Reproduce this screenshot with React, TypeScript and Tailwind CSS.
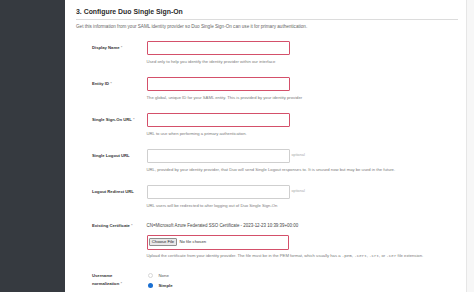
const font = { fontFamily: '"Liberation Sans", Arial, sans-serif' };

type Field = {
  label: string;
  required?: boolean;
  help: string;
  optional?: boolean;
};

const fields: Field[] = [
  { label: "Display Name", required: true, help: "Used only to help you identify the identity provider within our interface" },
  { label: "Entity ID", required: true, help: "The global, unique ID for your SAML entity. This is provided by your identity provider" },
  { label: "Single Sign-On URL", required: true, help: "URL to use when performing a primary authentication." },
  {
    label: "Single Logout URL",
    optional: true,
    help: "URL, provided by your identity provider, that Duo will send Single Logout responses to. It is unused now but may be used in the future.",
  },
  { label: "Logout Redirect URL", optional: true, help: "URL users will be redirected to after logging out of Duo Single Sign-On" },
];

const Label = ({ text, required }: { text: string; required?: boolean }) => (
  <div className="w-[70.5px] shrink-0 whitespace-nowrap pl-[16px] text-[4.2px] font-bold leading-[6px] text-[#333]">
    {text}
    {required ? <span className="font-normal text-[#777]"> *</span> : null}
  </div>
);

export default function App() {
  return (
    <div className="flex h-[292px] w-[474px] overflow-hidden bg-white" style={font}>
      <aside className="h-full w-[65px] shrink-0 bg-[#363a40]" />

      <main className="h-full flex-1 pl-[11px] pr-[8px]">
        <h1 className="border-b border-[#dcdcdc] pt-[7px] pb-[3px] text-[6.9px] font-bold leading-[9px] text-[#2b2b2b]">
          3. Configure Duo Single Sign-On
        </h1>
        <p className="mt-[4px] text-[4.6px] leading-[6px] text-[#666]">
          Get this information from your SAML identity provider so Duo Single Sign-On can use it for primary authentication.
        </p>

        <div className="mt-[11px]">
          {fields.map((f) => (
            <div key={f.label} className="h-[36px]">
              <div className="flex items-center">
                <Label text={f.label} required={f.required} />
                <div
                  className={
                    f.required
                      ? "h-[14px] w-[143px] rounded-[1px] border-[1.5px] border-[#d4506a] bg-white"
                      : "h-[14px] w-[143px] rounded-[1px] border border-[#cfcfcf] bg-white"
                  }
                />
                {f.optional ? <span className="ml-[2px] text-[3.8px] text-[#aaa]">optional</span> : null}
              </div>
              <p className="mt-[4px] whitespace-nowrap pl-[70.5px] text-[4.2px] leading-[6px] text-[#7a7a7a]">{f.help}</p>
            </div>
          ))}
        </div>

        <div className="mt-[2px] flex items-center">
          <Label text="Existing Certificate" required />
          <span className="whitespace-nowrap text-[4.45px] leading-[6px] text-[#444]">
            CN=Microsoft Azure Federated SSO Certificate - 2023-12-23 10:39:39+00:00
          </span>
        </div>
        <div className="mt-[5.5px] flex">
          <div className="w-[70.5px] shrink-0" />
          <div className="flex h-[15px] w-[142px] items-center rounded-[1px] border-[1.5px] border-[#d4506a] bg-white pl-[1.5px]">
            <span className="flex h-[7.5px] w-[28px] items-center justify-center rounded-[1px] border border-[#8f8f8f] bg-[#e9e9e9] text-[4.2px] text-[#222]">
              Choose File
            </span>
            <span className="ml-[2.5px] text-[4.2px] text-[#333]">No file chosen</span>
          </div>
        </div>
        <p className="mt-[3px] whitespace-nowrap pl-[70.5px] text-[4.2px] leading-[6px] text-[#7a7a7a]">
          Upload the certificate from your identity provider. The file must be in the PEM format, which usually has a{" "}
          <code className="font-['Liberation_Mono',monospace]">.pem</code>,{" "}
          <code className="font-['Liberation_Mono',monospace]">.cert</code>,{" "}
          <code className="font-['Liberation_Mono',monospace]">.crt</code>, or{" "}
          <code className="font-['Liberation_Mono',monospace]">.cer</code> file extension.
        </p>

        <div className="mt-[13px] flex">
          <div className="w-[70.5px] shrink-0 whitespace-nowrap pl-[16px] text-[4.2px] font-bold leading-[8.6px] text-[#333]">
            Username
            <br />
            normalization<span className="font-normal text-[#777]"> *</span>
          </div>
          <div className="flex flex-col pl-[1px]">
            <label className="flex h-[8.6px] items-center gap-[6px] text-[4.3px] text-[#555]">
              <span className="h-[5px] w-[5px] rounded-full border border-[#d8d8d8] bg-white" />
              None
            </label>
            <label className="mt-[1.5px] flex h-[8.6px] items-center gap-[6px] text-[4.3px] font-bold text-[#333]">
              <span className="h-[5px] w-[5px] rounded-full bg-[#1a6fd1]" />
              Simple
            </label>
          </div>
        </div>
      </main>

      <div className="h-full w-[8px] shrink-0 border-l border-[#e6e6e6] bg-[#f7f7f7]" />
    </div>
  );
}
